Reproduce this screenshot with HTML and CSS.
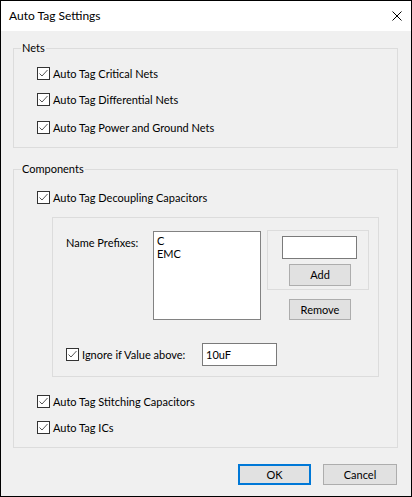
FILE: index.html
```html
<!DOCTYPE html>
<html>
<head>
<meta charset="utf-8">
<link rel="stylesheet" href="styles.css">
</head>
<body>
<div class="window">
  <div class="titlebar">
    <span class="title">Auto Tag Settings</span>
    <svg class="close" width="10" height="10" viewBox="0 0 10 10"><path d="M0.5 0.5L9.5 9.5M9.5 0.5L0.5 9.5" stroke="#000" stroke-width="1" fill="none"/></svg>
  </div>
  <div class="content">
    <div class="group nets">
      <span class="legend">Nets</span>
      <div class="cb-row"><span class="cb"><svg width="11" height="11" viewBox="0 0 11 11"><path d="M1.5 5.5L4 8L9.5 2" stroke="#555" stroke-width="1" fill="none"/></svg></span><span class="lbl">Auto Tag Critical Nets</span></div>
      <div class="cb-row"><span class="cb"><svg width="11" height="11" viewBox="0 0 11 11"><path d="M1.5 5.5L4 8L9.5 2" stroke="#555" stroke-width="1" fill="none"/></svg></span><span class="lbl">Auto Tag Differential Nets</span></div>
      <div class="cb-row"><span class="cb"><svg width="11" height="11" viewBox="0 0 11 11"><path d="M1.5 5.5L4 8L9.5 2" stroke="#555" stroke-width="1" fill="none"/></svg></span><span class="lbl">Auto Tag Power and Ground Nets</span></div>
    </div>
    <div class="group comps">
      <span class="legend">Components</span>
      <div class="cb-row"><span class="cb"><svg width="11" height="11" viewBox="0 0 11 11"><path d="M1.5 5.5L4 8L9.5 2" stroke="#555" stroke-width="1" fill="none"/></svg></span><span class="lbl">Auto Tag Decoupling Capacitors</span></div>
      <div class="panel">
        <div class="prefix-row">
          <span class="prefix-label">Name Prefixes:</span>
          <div class="listbox">
            <div class="item">C</div>
            <div class="item">EMC</div>
          </div>
          <div class="addcol">
            <div class="addbox">
              <div class="textbox"></div>
              <div class="btn add">Add</div>
            </div>
            <div class="btn remove">Remove</div>
          </div>
        </div>
        <div class="ignore-row">
          <span class="cb"><svg width="11" height="11" viewBox="0 0 11 11"><path d="M1.5 5.5L4 8L9.5 2" stroke="#555" stroke-width="1" fill="none"/></svg></span>
          <span class="lbl ignore-lbl">Ignore if Value above:</span>
          <div class="textbox value">10uF</div>
        </div>
      </div>
      <div class="cb-row stitch"><span class="cb"><svg width="11" height="11" viewBox="0 0 11 11"><path d="M1.5 5.5L4 8L9.5 2" stroke="#555" stroke-width="1" fill="none"/></svg></span><span class="lbl">Auto Tag Stitching Capacitors</span></div>
      <div class="cb-row ics"><span class="cb"><svg width="11" height="11" viewBox="0 0 11 11"><path d="M1.5 5.5L4 8L9.5 2" stroke="#555" stroke-width="1" fill="none"/></svg></span><span class="lbl">Auto Tag ICs</span></div>
    </div>
    <div class="footer">
      <div class="btn ok">OK</div>
      <div class="btn cancel">Cancel</div>
    </div>
  </div>
</div>
</body>
</html>
```
FILE: styles.css
```css
* { box-sizing: border-box; }
html, body { margin: 0; padding: 0; }
body {
  font-family: "Lato", "Liberation Sans", sans-serif;
  font-size: 11px;
  color: #000;
  background: #fff;
}
.window {
  width: 412px;
  height: 497px;
  border: 1px solid #000;
  background: #f0f0f0;
  overflow: hidden;
}
.titlebar {
  height: 30px;
  background: #fff;
  display: flex;
  align-items: center;
  justify-content: space-between;
  padding: 0 9px 0 8px;
}
.title { line-height: 16px; font-size: 12px; }
.close { display: block; }
.content {
  padding: 17px 13px 0 12px;
}
.group {
  position: relative;
  width: 385px;
  border: 1px solid #dcdcdc;
  display: flex;
  flex-direction: column;
}
.legend {
  position: absolute;
  top: -9px;
  left: 7px;
  padding: 0 1px;
  line-height: 16px;
  background: #f0f0f0;
}
.nets {
  padding: 18px 0 13px 0;
  gap: 13px;
}
.nets .cb-row:last-child { margin-top: 2px; }
.comps {
  margin-top: 21px;
  padding: 21px 0 13px 0;
}
.cb-row {
  display: flex;
  align-items: center;
  height: 13px;
  margin-left: 23px;
}
.cb {
  width: 13px;
  height: 13px;
  flex: none;
  border: 1px solid #333;
  background: #fff;
  display: block;
}
.cb svg { display: block; }
.lbl {
  margin-left: 3px;
  line-height: 15px;
  white-space: nowrap;
}
.panel {
  margin: 13px 0 0 38px;
  width: 327px;
  height: 160px;
  border: 1px solid #dcdcdc;
  padding: 12px 0 0 13px;
}
.prefix-row {
  display: flex;
  align-items: flex-start;
}
.prefix-label {
  width: 87px;
  margin-top: 5px;
  line-height: 16px;
}
.listbox {
  width: 108px;
  height: 89px;
  margin-top: 1px;
  border: 1px solid #828282;
  background: #fff;
  padding: 2px 0 0 3px;
}
.item { line-height: 13px; }
.addcol {
  margin-left: 6px;
  display: flex;
  flex-direction: column;
}
.addbox {
  width: 102px;
  height: 60px;
  border: 1px solid #dcdcdc;
  padding: 5px 0 0 14px;
}
.textbox {
  width: 75px;
  height: 23px;
  border: 1px solid #7a7a7a;
  background: #fff;
}
.btn {
  background: #e1e1e1;
  border: 1px solid #adadad;
  display: flex;
  align-items: center;
  justify-content: center;
  line-height: 16px;
}
.add {
  width: 62px;
  height: 22px;
  margin: 5px 0 0 7px;
}
.remove {
  width: 62px;
  height: 21px;
  margin: 9px 0 0 22px;
}
.ignore-row {
  display: flex;
  align-items: center;
  height: 23px;
  margin-top: 23px;
}
.ignore-lbl { width: 120px; }
.value {
  padding-left: 3px;
  line-height: 21px;
}
.stitch { margin-top: 18px; }
.ics { margin-top: 13px; }
.footer {
  width: 384px;
  margin-top: 16px;
  display: flex;
  justify-content: flex-end;
  gap: 12px;
}
.ok {
  width: 73px;
  height: 21px;
  border: 2px solid #0078d7;
}
.cancel {
  width: 74px;
  height: 21px;
}
```
